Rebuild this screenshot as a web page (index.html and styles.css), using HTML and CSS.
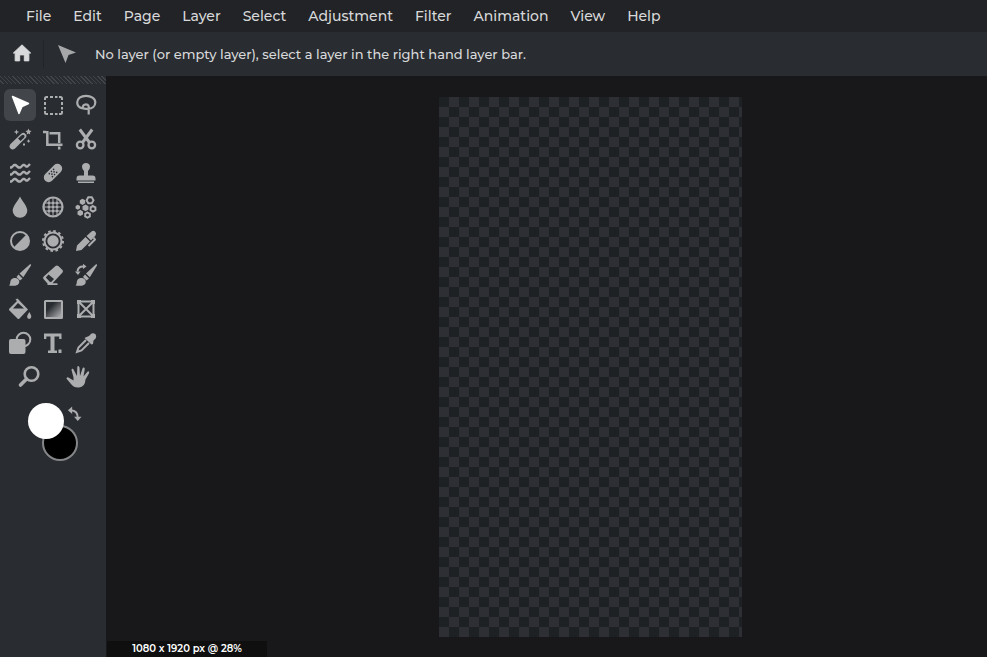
FILE: index.html
```html
<!DOCTYPE html>
<html lang="en">
<head>
<meta charset="utf-8">
<meta name="viewport" content="width=device-width, initial-scale=1">
<title>Image editor</title>
<link rel="stylesheet" href="styles.css">
</head>
<body>
<nav class="menu" aria-label="Main menu">
  <button>File</button><button>Edit</button><button>Page</button><button>Layer</button><button>Select</button><button>Adjustment</button><button>Filter</button><button>Animation</button><button>View</button><button>Help</button>
</nav>
<header class="options">
  <button class="home" aria-label="Home"><svg viewBox="0 0 24 24"><path d="M12 2 21.500 11h-2v8.500h-5V13h-5v6.500h-5V11h-2z" stroke="currentColor" stroke-linejoin="round"/></svg></button>
  <svg class="current" viewBox="0 0 24 24"><path d="M3 3 21 10.500 13.500 13 10.500 21z"/></svg>
  <p>No layer (or empty layer), select a layer in the right hand layer bar.</p>
</header>
<div class="editor">
  <aside class="toolbar">
    <div class="grip"></div>
    <div class="tools">
      <button class="active" aria-label="Arrange"><svg viewBox="0 0 24 24"><path d="M4.500 3.500 20.500 10.500 14 13.500 11 20.500z" stroke="currentColor" stroke-width="1.500" stroke-linejoin="round"/></svg></button>
      <button aria-label="Marquee"><svg class="line" viewBox="0 0 24 24"><path d="M7 4H5.500Q4 4 4 5.500V7M18 4h1.500Q21 4 21 5.500V7M4 18v1.500Q4 21 5.500 21H7M18 21h1.500q1.500 0 1.500-1.500V18M9 4h3M14 4h2.500M9 21h3M14 21h2.500M4 9v3M4 14v2.500M21 9v3M21 14v2.500"/></svg></button>
      <button aria-label="Lasso"><svg class="line" viewBox="0 0 24 24"><path d="M9 15.500C5.500 14.800 3.200 12.500 3.200 9.500 3.200 5.500 7 2.800 12 2.800s9.300 2.700 9.300 6.700c0 3.500-3 6-7 6.200-3 .3-4.700 0-5.300-.7-.8-1.800.8-3.700 3-3.700 2.300 0 3 2 2.700 4.500V21.500" stroke-width="2.200"/></svg></button>

      <button aria-label="Wand"><svg viewBox="0 0 24 24"><path fill-rule="evenodd" d="M2.500 17 13.500 6.500Q15.500 5 17.500 7T17.500 11L7 21.500Q4.500 23.500 2.500 21.500T2.500 17ZM10 11.500 12.500 14 16 10.700Q17.200 9.300 16.200 8.300 15 7.300 13.700 8.300Z"/><path d="m8.500 2.500.8 1.800 1.900.7-1.900.8-.8 1.900-.8-1.900-1.900-.8 1.900-.7zM20.500 1.500l.9 2 2.100.5-1.600 1.400.3 2.100-1.700-1-1.800 1 .4-2.100L17.500 4l2.100-.5zM20.500 12l.7 1.400 1.400.6-1.400.7-.7 1.400-.6-1.400-1.400-.7 1.400-.6zM15 16.500h2v2h-2z"/></svg></button>
      <button aria-label="Crop"><svg class="line" viewBox="0 0 24 24"><path d="M6.300 4v13.700H21.500M8.500 6.300h9.700V16M2 5h3M18.200 19.500v3" stroke-width="2.500"/></svg></button>
      <button aria-label="Cutout"><svg class="line" viewBox="0 0 24 24"><path d="m5.800 2.500 9.700 13M18.200 2.500l-9.700 13" stroke-width="3"/><circle cx="6.200" cy="18" r="3.300" stroke-width="2.300"/><circle cx="17.800" cy="18" r="3.300" stroke-width="2.300"/></svg></button>

      <button aria-label="Liquify"><svg class="line" viewBox="0 0 24 24"><path d="M2 6.500H3.500L6 4H7.500L10.500 6.500H12.500L15 4H16.500L18 5.500H19.500L22 3M2 13.500H3.500L6 11H7.500L10.500 13.500H12.500L15 11H16.500L18 12.500H19.500L22 10M2 20.500H3.500L6 18H7.500L10.500 20.500H12.500L15 18H16.500L18 19.500H19.500L22 17" stroke-width="2.400" stroke-linejoin="round"/></svg></button>
      <button aria-label="Heal"><svg viewBox="0 0 24 24"><g transform="rotate(-45 12 12)"><rect x="1" y="7.200" width="22" height="9.600" rx="4.800"/><g class="cut"><circle cx="9" cy="9.800" r=".8"/><circle cx="12" cy="9.800" r=".8"/><circle cx="15" cy="9.800" r=".8"/><circle cx="9" cy="14.200" r=".8"/><circle cx="12" cy="14.200" r=".8"/><circle cx="15" cy="14.200" r=".8"/><circle cx="10.500" cy="12" r=".8"/><circle cx="13.500" cy="12" r=".8"/></g></g></svg></button>
      <button aria-label="Clone"><svg viewBox="0 0 24 24"><path d="M10 10Q8 8 8 5.700C8 3.200 9.800 2 12 2s4 1.200 4 3.700Q16 8 14 10v4.500H18.500q3 0 3 3v2h-19v-2q0-3 3-3H10zM4 20.500h16V22H4z"/></svg></button>

      <button aria-label="Blur"><svg viewBox="0 0 24 24"><path d="M12 1.500C10 6 4.700 11 4.700 15.800a7.300 7 0 0 0 14.600 0C19.300 11 14 6 12 1.500z"/></svg></button>
      <button aria-label="Detail"><svg class="line" viewBox="0 0 24 24"><circle cx="12" cy="12" r="9.500" stroke-width="2.200"/><path d="M8 4v16M12 3v18M16 4v16M4 8h16M3 12h18M4 16h16" stroke-width="1"/><path d="M6.700 8h11M6.700 12h11M6.700 16h11" stroke-width="2.600" stroke-dasharray="2.600 1.400"/></svg></button>
      <button aria-label="Disperse"><svg viewBox="0 0 24 24"><path d="m11.500 9.500 3 1.700v3.400l-3 1.700-3-1.700v-3.400zM8.500 3.700l2.700 1.600v3L8.500 9.900 5.800 8.300v-3zM3.800 9.700 6 11v2.500l-2.200 1.300-2.200-1.300V11zM6.200 14.800 9 16.400v3l-2.800 1.600-2.700-1.600v-3z"/><path class="stroke" d="M14.300 2.200h3.500l1.700 3-1.700 3h-3.500l-1.700-3zM19 11l2.400 1.400v2.800L19 16.600l-2.400-1.400v-2.800zM13.500 17.500l2.300 1.300v2.600l-2.300 1.300-2.300-1.300v-2.600z"/></svg></button>

      <button aria-label="Dodge and burn"><svg viewBox="0 0 24 24"><circle class="stroke" cx="12" cy="12" r="9"/><path d="M18.700 5.300A9.500 9.500 0 0 1 5.300 18.700z"/></svg></button>
      <button aria-label="Sponge"><svg viewBox="0 0 24 24"><circle class="stroke" cx="12" cy="12" r="8.500"/><circle class="stroke" cx="12" cy="12" r="10" stroke-dasharray="2.600 2.636"/><circle cx="12" cy="12" r="5.700"/></svg></button>
      <button aria-label="Pen"><svg viewBox="0 0 24 24"><path d="M2 22 3 16.500 11.500 8 16 12.500 7.500 21zM12.500 7l5-4.500q2-1.500 3.700.3t.3 3.700L17 11.500z"/><path class="stroke" d="m19.500 8.500 1.500 2-6.500 6.500" stroke-linejoin="round"/></svg></button>

      <button aria-label="Brush"><svg viewBox="0 0 24 24"><path d="M1 22.500C3 21 1.500 18.500 3.500 16.300c2-2 5.200-1.500 6.700 0s1.600 4.200-.4 5.400c-2.500 1.500-6.300 1.300-8.800.8zM8.500 14l2-2.500 4 4-2.500 2zM11.500 10.500 22 1.200Q23.500 1 23 2.500L15.300 14.300z"/></svg></button>
      <button aria-label="Eraser"><svg viewBox="0 0 24 24"><path fill-rule="evenodd" d="M2.700 13.500 14.500 3q1.500-1 2.800 0l4.200 4q1 1.300 0 2.500L11.500 20.200h5V22H6.500V20.500L2.500 16q-1-1.200.2-2.500zM7.500 11.500 4.800 14.500 9 19l1.500-.3L13 16z"/></svg></button>
      <button aria-label="History brush"><svg viewBox="0 0 24 24"><path d="M1.500 22.500C3.500 21 2 18.500 4 16.300c2-2 5.200-1.500 6.700 0s1.600 4.200-.4 5.400c-2.500 1.500-6.300 1.300-8.800.8zM9 14l2-2.500 4 4-2.500 2zM12 10.500 22 1.200Q23.500 1 23 2.500L15.800 14.300zM1 8.500l3 3.500 2.500-3.500zM9 .8l3.500 2.700L9 6z"/><path class="stroke" d="M3.500 8.500Q4 3.500 9 3.500" stroke-width="1.500"/></svg></button>

      <button aria-label="Fill"><svg viewBox="0 0 24 24"><path fill-rule="evenodd" d="M7.500 2.500 9.500 1.500 20 12.500 11 22 10 22 1 13 1 12 9 4zM10 6 5 11.500H16z"/><path d="M21.300 15q2.200 3.300 2 4.800a2.100 2.100 0 0 1-4.200 0q0-1.500 2.200-4.800z"/></svg></button>
      <button aria-label="Gradient"><svg viewBox="0 0 24 24"><defs><linearGradient id="shade" x1="0" y1="0" x2="1" y2="1"><stop offset=".3" stop-color="#292c31"/><stop offset="1" stop-color="#b0b1b3"/></linearGradient></defs><rect class="stroke" x="4" y="4" width="17" height="17" rx=".5"/><rect x="5" y="5" width="15" height="15" fill="url(#shade)"/></svg></button>
      <button aria-label="Transform"><svg viewBox="0 0 24 24"><path d="M3 3h4v4H3zM17 3h4v4h-4zM3 17h4v4H3zM17 17h4v4h-4z"/><path class="stroke" d="M4.500 4.500h15v15h-15z"/><path class="stroke" d="M5 5 19 19M19 5 5 19" stroke-width="1.400"/></svg></button>

      <button aria-label="Shape"><svg viewBox="0 0 24 24"><circle class="stroke" cx="15.500" cy="8.500" r="6.800"/><rect x="1" y="8" width="16.500" height="15" rx="2"/></svg></button>
      <button aria-label="Text"><svg viewBox="0 0 24 24"><path d="M3 2.500h17.500V8h-2.300V5.500H13.500V19.500h2.500V22H7v-2.500h2.500v-14H5.300V8H3zM17.500 18.500h3V22h-3z"/></svg></button>
      <button aria-label="Picker"><svg viewBox="0 0 24 24"><path d="m12.500 6 2.500-1 2.500-2.500q2-1 4 .7 1.500 2 .3 4L19.500 9.500l-.5 3.500-1.500.5L10.500 7z"/><path class="stroke" d="M12 9 4.500 16.500 3 21l4.500-1.500 7.500-7.500"/></svg></button>
    </div>
    <div class="tools pair">
      <button aria-label="Zoom"><svg class="line" viewBox="0 0 24 24"><circle cx="14.500" cy="9" r="6.800" stroke-width="2.600"/><path d="M9.500 14 3.500 20" stroke-width="3.600" stroke-linecap="round"/></svg></button>
      <button aria-label="Hand"><svg viewBox="0 0 24 24"><path d="M7.500 12.500 5.500 5q0-1.500 1.200-1.300Q7.500 4 8 5.500l3 5.500.3-9Q11.500 1 12.300 1t1.200 1.500L14 11l2.500-7.500Q17 2 18 2.500q1 .3.700 2L17.500 11.500l3.700-4.500q1-1.200 1.700-.4.600.6 0 2L19.500 14.500q-.5 7.500-6.500 8-5 .5-8-3.500L.8 14q-.8-1 .2-1.500 1-.5 2.300.4L7.500 15.500z"/></svg></button>
    </div>
    <div class="colors">
      <button class="swatch back" aria-label="Background color"></button>
      <button class="swatch front" aria-label="Foreground color"></button>
      <button class="swap" aria-label="Swap colors"><svg viewBox="0 0 16 16"><path d="M1 4 5.500 0v8zM7.500 11h8L11.500 15.500z"/><path class="stroke" d="M4 4Q11.500 4.500 11.500 12"/></svg></button>
    </div>
  </aside>
  <main class="workspace">
    <div class="canvas"></div>
    <div class="status">1080 x 1920 px @ 28%</div>
  </main>
</div>
</body>
</html>
```
FILE: styles.css
```css
* { box-sizing: border-box; }
body {
  margin: 0;
  min-height: 100vh;
  display: flex;
  flex-direction: column;
  background: #18181a;
  color: #d8d9da;
  font-family: Montserrat, Inter, sans-serif;
  font-weight: 500;
}
button {
  margin: 0;
  padding: 0;
  border: 0;
  background: none;
  color: inherit;
  font: inherit;
}
svg { display: block; width: 24px; height: 24px; fill: currentColor; }
.line, .stroke { fill: none; stroke: currentColor; stroke-width: 2; }
.cut { fill: #292c31; }

.menu {
  display: flex;
  height: 32px;
  padding: 0 15px;
  background: #222326;
  font-size: 14px;
}
.menu button { padding: 0 11px; }

.options {
  display: flex;
  align-items: center;
  height: 44px;
  background: #292c31;
  font-size: 13px;
}
.options p { margin: 0 0 0 16px; }
.home {
  display: grid;
  place-items: center;
  width: 44px;
  height: 28px;
  border-right: 1px solid #222428;
}
.home svg { width: 22px; height: 22px; }
.current { margin-left: 11px; color: #a6a7a9; }

.editor { display: flex; flex: 1; }
.toolbar { width: 106px; background: #292c31; color: #acadaf; }
.grip {
  height: 8px;
  margin-bottom: 5px;
  background: repeating-linear-gradient(45deg, #292c31 0 2px, #414448 2px 3px);
}
.tools {
  display: grid;
  grid-template-columns: repeat(3, 32px);
  gap: 2px 1px;
  padding: 0 4px;
}
.tools button {
  display: grid;
  place-items: center;
  height: 32px;
  border-radius: 6px;
}
.tools .active { background: #424549; color: #fff; }
.pair { display: flex; justify-content: space-around; gap: 0; padding-top: 2px; }
.pair button { width: 32px; }

.colors {
  position: relative;
  width: 54px;
  height: 58px;
  margin: 10px auto 0 28px;
}
.swatch {
  position: absolute;
  width: 36px;
  height: 36px;
  border-radius: 50%;
}
.front { top: 0; left: 0; background: #fff; }
.back { right: 4px; bottom: 0; background: #000; border: 2px solid #858688; }
.swap { position: absolute; top: 3px; right: 0; }
.swap svg { width: 15px; height: 16px; }

.workspace {
  position: relative;
  display: grid;
  place-items: center;
  flex: 1;
  padding-left: 88px;
}
.canvas {
  height: 540px;
  aspect-ratio: 1080 / 1920;
  background: repeating-conic-gradient(#2e2f34 0 25%, #1d2124 0 50%) 0 0 / 20px 20px;
}
.status {
  position: absolute;
  left: 1px;
  bottom: 0;
  width: 160px;
  height: 16px;
  background: #0f0f10;
  color: #fff;
  font-size: 10px;
  line-height: 16px;
  font-weight: 600;
  text-align: center;
}
```
